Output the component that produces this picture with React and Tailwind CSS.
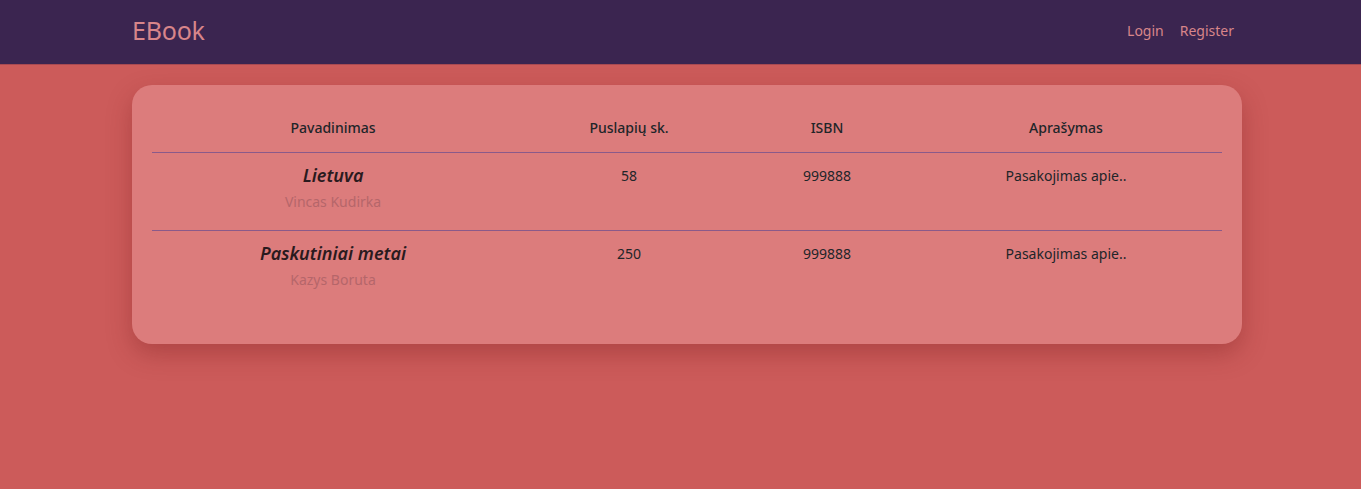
import React from "react";

const BOOKS = [
  { title: "Lietuva", author: "Vincas Kudirka", pages: 58, isbn: "999888", desc: "Pasakojimas apie.." },
  { title: "Paskutiniai metai", author: "Kazys Boruta", pages: 250, isbn: "999888", desc: "Pasakojimas apie.." },
];

export default function App() {
  return (
    <div
      className="min-h-[489px] bg-[#cc5b5a] text-[#212529]"
      style={{ fontFamily: '"Noto Sans", "Open Sans", sans-serif' }}
    >
      {/* navbar */}
      <nav className="h-[65px] bg-[#3b2550] border-b border-[#a84a52]">
        <div className="ml-[132px] w-[1110px] h-full flex items-center justify-between">
          <span className="text-[25px] text-[#d8858a] tracking-[-0.2px] mb-[3px]">EBook</span>
          <div className="flex items-center gap-[16px] text-[14px] text-[#d8858a] pr-[8px] mb-[3px]">
            <span>Login</span>
            <span>Register</span>
          </div>
        </div>
      </nav>

      <div className="ml-[132px] w-[1110px] pt-[20px]">
        <section className="bg-[#dc7c7c] rounded-[20px] shadow-[0_10px_25px_rgba(120,30,30,0.35)] px-[20px] pt-[19px] pb-[36px]">
          <table className="w-full text-[14px] text-center border-collapse">
            <thead>
              <tr className="border-b border-[#8a5a8a]">
                <th className="w-[362px] font-medium h-[48px] align-middle">Pavadinimas</th>
                <th className="w-[230px] font-medium align-middle">Puslapių sk.</th>
                <th className="w-[166px] font-medium align-middle">ISBN</th>
                <th className="font-medium align-middle">Aprašymas</th>
              </tr>
            </thead>
            <tbody>
              {BOOKS.map((b, i) => (
                <tr key={b.title} className={i === 0 ? "border-b border-[#8a5a8a]" : ""}>
                  <td className="pt-[10px] pb-[18px] align-top">
                    <div className="text-[18px] italic font-semibold leading-[24px] text-[#2a1a1e]">{b.title}</div>
                    <div className="mt-[5px] text-[14px] text-[#b5666a] leading-[20px]">{b.author}</div>
                  </td>
                  <td className="pt-[12px] align-top">{b.pages}</td>
                  <td className="pt-[12px] align-top">{b.isbn}</td>
                  <td className="pt-[12px] align-top">{b.desc}</td>
                </tr>
              ))}
            </tbody>
          </table>
        </section>
      </div>
    </div>
  );
}
